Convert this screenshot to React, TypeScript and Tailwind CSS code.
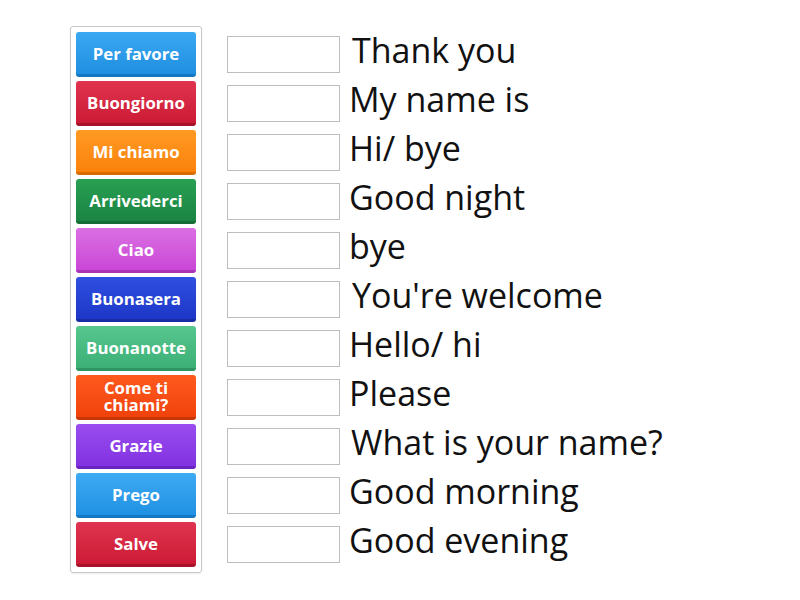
import React from "react";

const tiles: { label: string; cls: string }[] = [
  { label: "Per favore", cls: "bg-gradient-to-b from-[#3aa8f2] to-[#1f8fe0] border-b-[#1577c2]" },
  { label: "Buongiorno", cls: "bg-gradient-to-b from-[#e0334f] to-[#cc1a35] border-b-[#a8112a]" },
  { label: "Mi chiamo", cls: "bg-gradient-to-b from-[#ff9a22] to-[#fb8209] border-b-[#d86c00]" },
  { label: "Arrivederci", cls: "bg-gradient-to-b from-[#28a052] to-[#1b8443] border-b-[#156c35]" },
  { label: "Ciao", cls: "bg-gradient-to-b from-[#db6fe3] to-[#c947d6] border-b-[#a934b5]" },
  { label: "Buonasera", cls: "bg-gradient-to-b from-[#2f4fe0] to-[#1d37c8] border-b-[#172ba3]" },
  { label: "Buonanotte", cls: "bg-gradient-to-b from-[#56c68e] to-[#3cb077] border-b-[#2d9462]" },
  { label: "Come ti chiami?", cls: "bg-gradient-to-b from-[#ff5a1e] to-[#f0420a] border-b-[#c63506]" },
  { label: "Grazie", cls: "bg-gradient-to-b from-[#9a4cf0] to-[#8232e0] border-b-[#6a22c0]" },
  { label: "Prego", cls: "bg-gradient-to-b from-[#3eaaf3] to-[#1f91e2] border-b-[#1577c2]" },
  { label: "Salve", cls: "bg-gradient-to-b from-[#e0334f] to-[#cc1a35] border-b-[#a8112a]" },
];

const answers: { text: string; off: string }[] = [
  { text: "Thank you", off: "ml-[12px]" },
  { text: "My name is", off: "ml-[9px]" },
  { text: "Hi/ bye", off: "ml-[9px]" },
  { text: "Good night", off: "ml-[9px]" },
  { text: "bye", off: "ml-[9px]" },
  { text: "You're welcome", off: "ml-[12px]" },
  { text: "Hello/ hi", off: "ml-[9px]" },
  { text: "Please", off: "ml-[9px]" },
  { text: "What is your name?", off: "ml-[11px]" },
  { text: "Good morning", off: "ml-[9px]" },
  { text: "Good evening", off: "ml-[9px]" },
];

export default function App() {
  return (
    <div
      className="w-[800px] h-[600px] bg-white flex items-start pl-[70px] pt-[26px]"
      style={{ fontFamily: '"Open Sans", "Noto Sans", sans-serif' }}
    >
      <div className="border border-[#c8c8c8] rounded-[3px] p-[5px] flex flex-col gap-[4px] shadow-[0_1px_2px_rgba(0,0,0,0.08)]">
        {tiles.map((t) => (
          <div
            key={t.label}
            className={`w-[120px] h-[45px] rounded-[3px] border-b-[3px] flex items-center justify-center text-center text-white font-bold text-[16.8px] leading-[17px] px-2 ${t.cls}`}
          >
            {t.label}
          </div>
        ))}
      </div>
      <div className="flex flex-col mt-[4px] ml-[25px]">
        {answers.map((a) => (
          <div key={a.text} className="h-[49px] flex items-center">
            <div className="w-[113px] h-[37px] border border-[#bdbdbd] bg-white shrink-0" />
            <div className={`${a.off} mb-[9px] text-[34px] leading-none text-[#111] whitespace-nowrap`}>{a.text}</div>
          </div>
        ))}
      </div>
    </div>
  );
}
